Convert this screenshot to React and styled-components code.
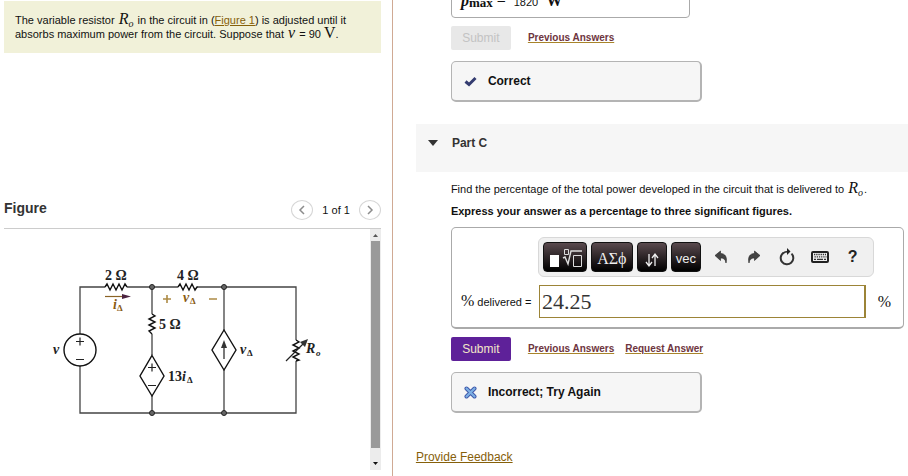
import React, { useState } from 'react';
import styled, { createGlobalStyle, css } from 'styled-components';

const GlobalStyle = createGlobalStyle`
    *{ box-sizing:border-box; }

    body{
        margin:0;
        background:#fff;
        color:#111;
        font-family:"Liberation Sans", Arial, sans-serif;
        font-size:11px;
        line-height:14px;
    }

    button, input{ font-family:inherit; }
`

const StyledPage = styled.div`
    display:grid;
    grid-template-columns:minmax(0, 45fr) minmax(0, 59fr);
    height:100vh;
    overflow:hidden;
`

/* left side */

const LeftPane = styled.aside`
    display:flex;
    flex-direction:column;
    padding:1px 11px 6px 4px;
    border-right:1px solid #d0aa94;
    min-height:0;
`

const Prompt = styled.p`
    margin:0;
    padding:12px 11px;
    background:#f1f1d9;
    font-size:${props => props.$size || 11}px;
`

const Var = styled.i`
    padding:0 1px;
    font-family:"Liberation Serif", serif;
    font-size:16px;
    line-height:1px;

    sub{
        font-size:10px;
        line-height:1px;
        vertical-align:-3px;
    }
`

const Unit = styled.span`
    font-family:"Liberation Serif", serif;
    font-size:16px;
    line-height:1px;
`

const FigureHeader = styled.header`
    display:flex;
    align-items:center;
    height:38px;
    margin-top:138px;
    border-bottom:1px solid #ccc;

    h2{
        flex:1;
        margin:0 0 4px;
        font-size:14px;
        color:#333;
    }
`

const Pager = styled.div`
    display:flex;
    align-items:center;
    gap:9px;
`

const RoundButton = styled.button`
    display:flex;
    align-items:center;
    justify-content:center;
    width:22px;
    height:20px;
    padding:0;
    border:1px solid #d6d6d6;
    border-radius:50%;
    background:#fff;
`

const FigureBody = styled.div`
    display:flex;
    flex:1;
    min-height:0;
    justify-content:space-between;

    > svg{ flex:none; }
`

const ScrollTrack = styled.div`
    display:flex;
    flex-direction:column;
    width:11px;
    background:#ececec;
    margin-left:-1px;
`

const ScrollArrow = styled.div`
    display:flex;
    justify-content:center;
    align-items:center;
    height:${props => props.$tall ? 22 : 12}px;
    padding-top:${props => props.$tall ? 8 : 0}px;
`

const ScrollThumb = styled.div`
    flex:1;
    margin:0 1px;
    background:#9a9a9a;
`

/* right side */

const RightPane = styled.main`
    display:flex;
    flex-direction:column;
    padding-left:23px;
    min-width:0;
`

const Part = styled.section`
    display:flex;
    flex-direction:column;
    padding:0 4px 0 35px;
`

const PreviousAnswer = styled.div`
    display:flex;
    align-items:baseline;
    gap:8px;
    width:239px;
    height:44px;
    margin-top:-26px;
    padding:20px 9px 0;
    border:1px solid #aaa;
    border-radius:4px;

    sub{
        font-size:13px;
        line-height:1px;
        vertical-align:-1px;
    }
`

const Actions = styled.div`
    display:flex;
    align-items:center;
    gap:11px;
    margin:8px 0 11px;
`

const SubmitButton = styled.button`
    width:60px;
    height:24px;
    margin-right:6px;
    padding:0;
    border:0;
    border-radius:2px;
    font-size:12px;
    background:#5e2199;
    color:#f3e6c8;

    ${props => props.disabled && css`
        background:#e8e8e8;
        color:#c3c3c3;
    `}
`

const SmallLink = styled.a`
    font-size:10px;
    font-weight:bold;
    color:#6e3540;
    text-decoration-color:#a8842a;
`

const GoldLink = styled.a`
    color:#86600a;
    font-size:${props => props.$size || 11}px;
`

const Feedback = styled.div`
    display:flex;
    align-items:center;
    gap:11px;
    width:251px;
    height:41px;
    padding:0 12px;
    border:1px solid #b4b4b4;
    border-right-width:2px;
    border-bottom-width:2px;
    border-radius:5px;
    background:#f6f6f6;
    font-size:12px;
    font-weight:bold;
`

const PartHeader = styled.header`
    display:flex;
    gap:14px;
    height:48px;
    margin:22px 0 10px;
    padding:12px;
    background:#f6f6f6;

    h3{
        margin:0;
        font-size:12px;
        color:#333;
    }

    svg{ margin-top:4px; }
`

const Question = styled.p`
    margin:0 0 8px;
    font-weight:${props => props.$bold ? 'bold' : 'normal'};
`

const AnswerBox = styled.div`
    display:grid;
    grid-template-columns:78px minmax(0, 1fr) 37px;
    row-gap:8px;
    align-items:center;
    height:102px;
    margin-top:1px;
    padding:9px 0 9px 9px;
    border:1px solid #aaa;
    border-bottom-width:2px;
    border-radius:5px;

    label{ grid-column:1; }
`

const Toolbar = styled.div`
    grid-column:2 / 4;
    display:flex;
    align-items:center;
    height:40px;
    margin-right:29px;
    margin-left:-1px;
    padding:0 4px;
    gap:4px;
    border:1px solid #d8d8d8;
    border-radius:6px;
    background:#f0f0f0;
`

const DarkButton = styled.button`
    display:flex;
    align-items:flex-end;
    justify-content:center;
    width:${props => props.$width}px;
    height:30px;
    padding:0 0 3px;
    border:1px solid #111;
    border-radius:4px;
    background:linear-gradient(#5a4a4e, #2c2426 50%, #000);
    color:#eee;
    font-family:${props => props.$serif ? '"Liberation Serif", serif' : 'inherit'};
    font-size:${props => props.$serif ? 16 : 13}px;
    line-height:18px;
`

const IconGroup = styled.div`
    display:flex;
    flex:1;
    justify-content:space-around;
`

const IconButton = styled.button`
    display:flex;
    align-items:center;
    justify-content:center;
    width:24px;
    height:24px;
    padding:0;
    border:0;
    background:none;
    color:#222;
    font-size:16px;
    font-weight:bold;
`

const AnswerInput = styled.input`
    width:100%;
    height:33px;
    padding:0 2px;
    border:1px solid #9c8437;
    border-right-width:2px;
    background:#fff;
    color:#333;
    font-family:"Liberation Serif", serif;
    font-size:22px;
`

const AnswerUnit = styled(Unit)`
    text-align:center;
    line-height:18px;
`

const PageFooter = styled.footer`
    margin-top:37px;
`

const Chevron = ({ d }) => (
    <svg width="8" height="12" viewBox="0 0 8 12" fill="none" stroke="#8c8c8c" strokeWidth="1.5">
        <path d={d} />
    </svg>
)

const SvgText = styled.text`
    font-family:"Liberation Serif", serif;
    font-size:${props => props.$small ? 9 : 14}px;
    font-weight:bold;
    font-style:${props => props.$italic ? 'italic' : 'normal'};
    fill:${props => props.$gold ? '#8a5c14' : '#222'};
`

const Circuit = () => (
    <svg width="360" height="240" viewBox="4 229 360 240" role="img" aria-label="Circuit diagram">
        <g fill="none" stroke="#444" strokeWidth="1.3">
            <path d="M80 334V287H105M127 287H178M198 287H296V340M296 361V413H80V366" />
            <path d="M152 287V314M152 334V355M152 396V413M224 287V330M224 370V413" />
        </g>
        <g fill="none" stroke="#111" strokeWidth="1.4" strokeLinejoin="miter">
            <path d="M105 287l2-3 3 6 3-6 3 6 3-6 3 6 3-6 2 3" />
            <path d="M178 287l2-3 3 6 3-6 3 6 3-6 3 6 2-3h1" />
            <path d="M152 314l3 2-6 3 6 3-6 3 6 3-6 3 3 3" />
            <path d="M296 340l3 2-6 3 6 3-6 3 6 3-6 3 6 3-3 1" />
            <circle cx="80" cy="350" r="16" />
            <path d="M152 355.500L164 376 152 396 140 376Z" />
            <path d="M224 330L236 350 224 370 212 350Z" />
        </g>
        <g stroke="#222" strokeWidth="1.2">
            <path d="M76 341.500h8M80 337.500v8M76 359.500h8M148 367.500h8M152 363.500v8M148 385.500h8" />
            <path d="M224 359V345M286 361L304 343" />
        </g>
        <path d="M224 340l3 8h-6zM308 339l-3 8-5-5z" fill="#333" />
        <path d="M105 296.500H123" stroke="#8a6326" strokeWidth="1.2" />
        <path d="M131 296.500l-9-2.500v5z" fill="#4b2340" />
        <path d="M163 299h8M167 295v8M209 299h8" stroke="#ad8b45" strokeWidth="1.6" />
        <g fill="#666" stroke="#222">
            <circle cx="152" cy="287" r="2.500" />
            <circle cx="224" cy="287" r="2.500" />
            <circle cx="152" cy="413" r="2.500" />
            <circle cx="224" cy="413" r="2.500" />
        </g>
        <SvgText x="105" y="280">2 Ω</SvgText>
        <SvgText x="177" y="280">4 Ω</SvgText>
        <SvgText x="159" y="329">5 Ω</SvgText>
        <SvgText x="113" y="309" $italic $gold>i</SvgText>
        <SvgText x="117" y="311" $small $gold>Δ</SvgText>
        <SvgText x="183" y="302" $italic $gold>v</SvgText>
        <SvgText x="190" y="304" $small $gold>Δ</SvgText>
        <SvgText x="53" y="354" $italic>v</SvgText>
        <SvgText x="168" y="381">13</SvgText>
        <SvgText x="182" y="381" $italic>i</SvgText>
        <SvgText x="187" y="383" $small>Δ</SvgText>
        <SvgText x="240" y="354" $italic>v</SvgText>
        <SvgText x="247" y="356" $small>Δ</SvgText>
        <SvgText x="306" y="353" $italic>R</SvgText>
        <SvgText x="316" y="356" $italic $small>o</SvgText>
    </svg>
)

const RootIcon = () => (
    <svg width="36" height="22" viewBox="0 0 36 22" fill="none" stroke="#ddd">
        <rect x="3" y="9" width="9" height="12" fill="#fff" stroke="none" />
        <path d="M17.500 3.500h4v5h-4z" />
        <path d="M16 12l2-1 3 7 3-13h11" strokeWidth="1.4" />
        <path d="M26.500 9.500h8v11h-8z" />
    </svg>
)

const ArrowsIcon = () => (
    <svg width="14" height="16" viewBox="0 0 14 16" fill="none" stroke="#eee" strokeWidth="1.300">
        <path d="M4 2v11M1 10l3 4 3-4M10 14V3M7 6l3-4 3 4" />
    </svg>
)

const CurveArrow = ({ flip }) => (
    <svg width="14" height="14" viewBox="0 0 14 14" fill="#444" stroke="#222" strokeWidth=".6">
        <path
            d="M1 5.500L6.500 1v2.500C11 3.500 13.500 7 12 13 11.500 9.500 10 8 6.500 8v2.500Z"
            transform={flip ? 'translate(14 0) scale(-1 1)' : undefined}
        />
    </svg>
)

const ResetIcon = () => (
    <svg width="16" height="18" viewBox="0 0 16 18">
        <path d="M4.500 4.800A6.300 6.300 0 1 0 12.500 5.600" fill="none" stroke="#333" strokeWidth="2" />
        <path d="M4 5.200Q6 3.600 9 3.600" fill="none" stroke="#333" strokeWidth="1.800" />
        <path d="M8 0l3.500 3.600L8 7z" fill="#222" />
    </svg>
)

const KeyboardIcon = () => (
    <svg width="18" height="12" viewBox="0 0 18 12" fill="none">
        <rect x="1" y="1" width="16" height="10" rx="1" fill="#eee" stroke="#222" strokeWidth="2" />
        <path d="M3 3.500h12M3.500 5.800h12" stroke="#333" strokeWidth="1.300" strokeDasharray="1.300 .9" />
        <path d="M3 8.300h2M6 8.300h6M13 8.300h2" stroke="#333" strokeWidth="1.300" />
    </svg>
)

const CheckIcon = () => (
    <svg width="13" height="11" viewBox="0 0 13 11">
        <path d="M1.500 5.500L5 8.500 11.500 2" fill="none" stroke="#343c70" strokeWidth="3" />
    </svg>
)

const CrossIcon = () => (
    <svg width="13" height="13" viewBox="0 0 13 13" strokeLinecap="round">
        <path d="M2.500 2.500l8 8M10.500 2.500l-8 8" stroke="#3d55a8" strokeWidth="4" />
        <path d="M2.500 2.500l8 8M10.500 2.500l-8 8" stroke="#7db0e4" strokeWidth="2.200" />
    </svg>
)

const FigurePanel = () => (
    <>
        <FigureHeader>
            <h2>Figure</h2>
            <Pager>
                <RoundButton aria-label="Previous figure"><Chevron d="M6 2L2 6l4 4" /></RoundButton>
                <span>1 of 1</span>
                <RoundButton aria-label="Next figure"><Chevron d="M2 2l4 4-4 4" /></RoundButton>
            </Pager>
        </FigureHeader>
        <FigureBody>
            <Circuit />
            <ScrollTrack>
                <ScrollArrow>
                    <svg width="5" height="3"><path d="M0 3L2.500 0 5 3z" fill="#555" /></svg>
                </ScrollArrow>
                <ScrollThumb />
                <ScrollArrow $tall>
                    <svg width="5" height="3"><path d="M0 0h5L2.500 3z" fill="#111" /></svg>
                </ScrollArrow>
            </ScrollTrack>
        </FigureBody>
    </>
)

const AnswerForm = () => {
    const [answer, setAnswer] = useState('24.25')

    return (
        <AnswerBox>
            <Toolbar>
                <DarkButton $width={44} aria-label="Templates"><RootIcon /></DarkButton>
                <DarkButton $width={42} $serif>ΑΣϕ</DarkButton>
                <DarkButton $width={30} aria-label="Subscript and superscript"><ArrowsIcon /></DarkButton>
                <DarkButton $width={30}>vec</DarkButton>
                <IconGroup>
                    <IconButton aria-label="Undo"><CurveArrow /></IconButton>
                    <IconButton aria-label="Redo"><CurveArrow flip /></IconButton>
                    <IconButton aria-label="Reset"><ResetIcon /></IconButton>
                    <IconButton aria-label="Keyboard shortcuts"><KeyboardIcon /></IconButton>
                    <IconButton>?</IconButton>
                </IconGroup>
            </Toolbar>
            <label htmlFor="delivered"><Unit>%</Unit> delivered =</label>
            <AnswerInput id="delivered" value={answer} onChange={e => setAnswer(e.target.value)} />
            <AnswerUnit>%</AnswerUnit>
        </AnswerBox>
    )
}

export default function App() {
    return (
        <StyledPage>
            <GlobalStyle />
            <LeftPane>
                <Prompt>
                    The variable resistor <Var>R<sub>o</sub></Var> in the circuit in (<GoldLink href="#figure">Figure 1</GoldLink>) is
                    adjusted until it absorbs maximum power from the circuit. Suppose that <Var>v</Var> = 90 <Unit>V</Unit>.
                </Prompt>
                <FigurePanel />
            </LeftPane>
            <RightPane>
                <Part>
                    <PreviousAnswer>
                        <Unit><b><i>p</i><sub>max</sub></b> =</Unit>
                        <span>1820</span>
                        <Unit><b>W</b></Unit>
                    </PreviousAnswer>
                    <Actions>
                        <SubmitButton disabled>Submit</SubmitButton>
                        <SmallLink href="#previous">Previous Answers</SmallLink>
                    </Actions>
                    <Feedback><CheckIcon />Correct</Feedback>
                </Part>
                <PartHeader>
                    <svg width="10" height="6"><path d="M0 0h10L5 6z" fill="#333" /></svg>
                    <h3>Part C</h3>
                </PartHeader>
                <Part>
                    <Question>
                        Find the percentage of the total power developed in the circuit that is delivered to <Var>R<sub>o</sub></Var>.
                    </Question>
                    <Question $bold>Express your answer as a percentage to three significant figures.</Question>
                    <AnswerForm />
                    <Actions>
                        <SubmitButton>Submit</SubmitButton>
                        <SmallLink href="#previous">Previous Answers</SmallLink>
                        <SmallLink href="#request">Request Answer</SmallLink>
                    </Actions>
                    <Feedback><CrossIcon />Incorrect; Try Again</Feedback>
                </Part>
                <PageFooter>
                    <GoldLink href="#feedback" $size={12}>Provide Feedback</GoldLink>
                </PageFooter>
            </RightPane>
        </StyledPage>
    )
}
